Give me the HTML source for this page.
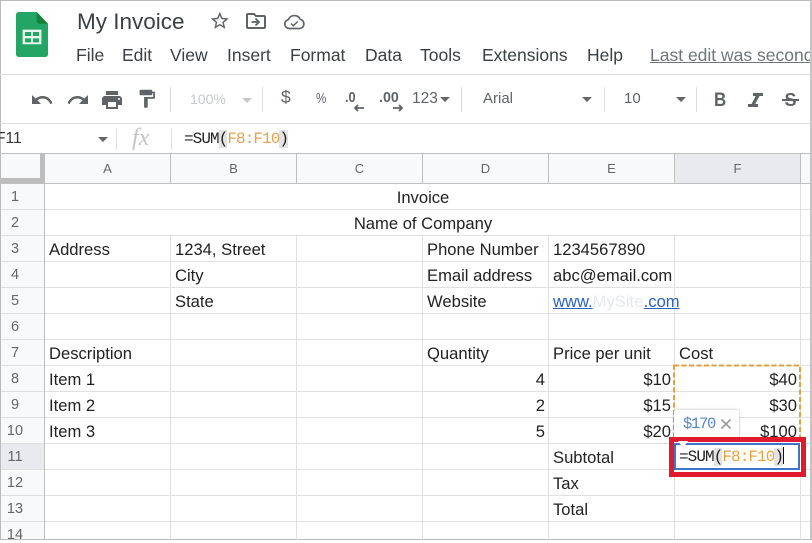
<!DOCTYPE html>
<html><head><meta charset="utf-8"><style>
html,body{margin:0;padding:0;background:#fff}
body{width:812px;height:540px;position:relative;overflow:hidden;font-family:"Liberation Sans",sans-serif;color:#222}
.a{position:absolute;white-space:nowrap}
.m{top:44px;font-size:17.5px;line-height:22px;color:#3c4043}
.l{position:absolute;background:#d4d4d4}
.c{position:absolute;font-size:16.6px;line-height:20px;white-space:nowrap;color:#222}
.r{text-align:right}
.h{position:absolute;font-size:13px;color:#666;text-align:center;line-height:16px}
.n{position:absolute;font-size:14.5px;color:#666;text-align:center;line-height:16px;left:1px;width:28px}
.tb{position:absolute;background:#dadce0;width:1px;top:87px;height:25px}
.d{position:absolute;width:0;height:0;border-left:5.5px solid transparent;border-right:5.5px solid transparent;border-top:5.5px solid #666}
.mono{font-family:"Liberation Mono",monospace}
.g{position:absolute;background:#e0e0e0;left:1px;width:809px;height:1px}
.v{position:absolute;background:#e0e0e0;width:1px;top:236px;height:304px}
.hv{position:absolute;background:#c0c0c0;width:1px;top:154px;height:29px}
</style></head><body>
<!-- frame -->
<div class="l" style="left:0;top:0;width:812px;height:1px;background:#bbb"></div>
<div class="l" style="left:0;top:0;width:1px;height:540px;background:#bbb"></div>
<div class="l" style="left:810px;top:0;width:2px;height:540px;background:#c4c4c4"></div>
<!-- logo -->
<svg class="a" style="left:16px;top:12px" width="32" height="45" viewBox="0 0 34 46" preserveAspectRatio="none">
<path d="M3 0H22L34 12V43a3 3 0 0 1-3 3H3a3 3 0 0 1-3-3V3a3 3 0 0 1 3-3z" fill="#23a566"/>
<path d="M22 0L34 12H25a3 3 0 0 1-3-3z" fill="#188038"/>
<path d="M7 18H27V33H7z M9.500 20.500V24.500H16V20.500z M18 20.500V24.500H24.500V20.500z M9.500 27V31H16V27z M18 27V31H24.500V27z" fill="#e6f4ea" fill-rule="evenodd"/>
</svg>
<div class="a" style="left:77px;top:8px;font-size:22.500px;line-height:28px;color:#3c4043">My Invoice</div>
<!-- star, move, cloud -->
<svg class="a" style="left:209px;top:10px" width="21.600" height="21.600" viewBox="0 0 24 24"><path d="M22 9.240l-7.190-.62L12 2 9.190 8.630 2 9.240l5.460 4.730L5.820 21 12 17.270 18.180 21l-1.630-7.030L22 9.240zM12 15.400l-3.760 2.270 1-4.280-3.320-2.880 4.380-.38L12 6.100l1.710 4.040 4.380.38-3.320 2.880 1 4.280L12 15.400z" fill="#5f6368"/></svg>
<svg class="a" style="left:245px;top:10px" width="22" height="20" viewBox="0 0 22 20"><path d="M3 4h6l2 2h8a1 1 0 0 1 1 1v10a1 1 0 0 1-1 1H3a1 1 0 0 1-1-1V5a1 1 0 0 1 1-1z" fill="none" stroke="#5f6368" stroke-width="2"/><path d="M6.500 12h7M10.500 8.500L14 12l-3.500 3.500" fill="none" stroke="#5f6368" stroke-width="1.800"/></svg>
<svg class="a" style="left:283px;top:13px" width="23" height="18" viewBox="0 0 23 18"><path d="M6 15.500a4.500 4.500 0 0 1-.6-8.900A6.500 6.500 0 0 1 17.300 6.300 4.700 4.700 0 0 1 17 15.500z" fill="none" stroke="#5f6368" stroke-width="1.700"/><path d="M8 10.500l2.300 2.200 4.500-4.200" fill="none" stroke="#5f6368" stroke-width="1.500"/></svg>
<!-- menu -->
<div class="a m" style="left:76px">File</div>
<div class="a m" style="left:122px">Edit</div>
<div class="a m" style="left:170px">View</div>
<div class="a m" style="left:227px">Insert</div>
<div class="a m" style="left:290px">Format</div>
<div class="a m" style="left:365px">Data</div>
<div class="a m" style="left:420px">Tools</div>
<div class="a m" style="left:482px">Extensions</div>
<div class="a m" style="left:587px">Help</div>
<div class="a m" style="left:650px;width:160px;overflow:hidden;color:#70757a;text-decoration:underline">Last edit was seconds ago</div>
<div class="l" style="left:0;top:74px;width:811px;height:1px;background:#dcdcdc"></div>
<!-- toolbar -->
<svg class="a" style="left:30px;top:88px" width="24" height="24" viewBox="0 0 24 24"><path d="M12.500 8c-2.650 0-5.050.99-6.900 2.600L2 7v9h9l-3.620-3.620c1.390-1.160 3.160-1.880 5.120-1.880 3.540 0 6.550 2.310 7.600 5.500l2.370-.78C21.080 11.030 17.150 8 12.500 8z" fill="#5f6368"/></svg>
<svg class="a" style="left:66px;top:88px" width="24" height="24" viewBox="0 0 24 24"><path d="M18.400 10.600C16.550 8.990 14.150 8 11.500 8c-4.650 0-8.580 3.030-9.960 7.220L3.900 16c1.050-3.190 4.050-5.500 7.600-5.500 1.950 0 3.730.72 5.120 1.880L13 16h9V7l-3.600 3.600z" fill="#5f6368"/></svg>
<svg class="a" style="left:100px;top:88px" width="24" height="24" viewBox="0 0 24 24"><path d="M19 8H5c-1.660 0-3 1.340-3 3v6h4v4h12v-4h4v-6c0-1.660-1.340-3-3-3zm-3 11H8v-5h8v5zm3-7c-.55 0-1-.45-1-1s.45-1 1-1 1 .45 1 1-.45 1-1 1zm-1-9H6v4h12V3z" fill="#5f6368"/></svg>
<svg class="a" style="left:136.400px;top:88px" width="21.600" height="21.600" viewBox="0 0 24 24"><path d="M18 4V3c0-.55-.45-1-1-1H5c-.55 0-1 .45-1 1v4c0 .55.45 1 1 1h12c.55 0 1-.45 1-1V6h1v4H9v11c0 .55.45 1 1 1h2c.55 0 1-.45 1-1v-9h8V4h-3z" fill="#5f6368"/></svg>
<div class="tb" style="left:170px"></div>
<div class="a" style="left:190px;top:90px;font-size:14px;line-height:18px;color:#c6c8ca">100%</div>
<div class="d" style="left:242px;top:98px;border-top-color:#c6c8ca"></div>
<div class="tb" style="left:262px"></div>
<div class="a" style="left:281px;top:87px;font-size:17.500px;line-height:20px;color:#5f6368">$</div>
<div class="a" style="left:316px;top:90px;font-size:14.500px;line-height:18px;color:#5f6368;transform:scaleX(.8);transform-origin:0 0">%</div>
<div class="a" style="left:345px;top:89px;font-size:15px;line-height:18px;color:#5f6368;font-weight:bold;transform:scaleX(.85);transform-origin:0 0">.0</div>
<svg class="a" style="left:353px;top:103px" width="12" height="10" viewBox="0 0 12 10"><path d="M11 5H2M5 2L2 5l3 3" fill="none" stroke="#5f6368" stroke-width="1.800"/></svg>
<div class="a" style="left:379px;top:89px;font-size:15px;line-height:18px;color:#5f6368;font-weight:bold;transform:scaleX(.95);transform-origin:0 0">.00</div>
<svg class="a" style="left:392px;top:103px" width="12" height="10" viewBox="0 0 12 10"><path d="M1 5h9M7 2l3 3-3 3" fill="none" stroke="#5f6368" stroke-width="1.800"/></svg>
<div class="a" style="left:412px;top:90px;font-size:15.500px;line-height:18px;color:#5f6368">123</div>
<div class="d" style="left:440px;top:97px"></div>
<div class="tb" style="left:461px"></div>
<div class="a" style="left:483px;top:90px;font-size:15px;line-height:18px;color:#5f6368">Arial</div>
<div class="d" style="left:582px;top:97px"></div>
<div class="tb" style="left:604px"></div>
<div class="a" style="left:624px;top:90px;font-size:15px;line-height:18px;color:#5f6368">10</div>
<div class="d" style="left:676px;top:97px"></div>
<div class="tb" style="left:696px"></div>
<div class="a" style="left:714px;top:89px;font-size:19.500px;line-height:22px;font-weight:bold;color:#5f6368;transform:scaleX(.87);transform-origin:0 0">B</div>
<svg class="a" style="left:748px;top:93px" width="15" height="14" viewBox="6 4 12 14" preserveAspectRatio="none"><path d="M10 4v3h2.210l-3.420 8H6v3h8v-3h-2.210l3.420-8H18V4z" fill="#5f6368"/></svg>
<div class="a" style="left:784.500px;top:89px;font-size:18px;line-height:22px;font-weight:bold;color:#5f6368">S</div>
<div class="a" style="left:782px;top:99px;width:17px;height:2px;background:#5f6368"></div>
<div class="l" style="left:0;top:123px;width:811px;height:1px;background:#dcdcdc"></div>
<!-- formula bar -->
<div class="a" style="left:0;top:129px;width:30px;overflow:hidden;font-size:15.500px;line-height:20px;color:#333"><span style="margin-left:-4px;display:inline-block">F11</span></div>
<div class="d" style="left:98px;top:137px"></div>
<div class="l" style="left:116px;top:129px;width:1px;height:21px;background:#e0e0e0"></div>
<div class="a" style="left:132px;top:124px;font-family:'Liberation Serif',serif;font-style:italic;font-size:24px;line-height:28px;color:#c4c4c4">fx</div>
<div class="l" style="left:171px;top:129px;width:1px;height:21px;background:#e0e0e0"></div>
<div class="a mono" style="left:184px;top:129px;font-size:16px;line-height:20px;letter-spacing:-.93px;color:#222">=SUM<span style="background:#e3e3e3">(</span><span style="color:#e8a04c">F8:F10</span><span style="background:#e3e3e3">)</span></div>
<div class="l" style="left:0;top:153px;width:811px;height:1px;background:#c0c0c0"></div>
<!-- header backgrounds -->
<div class="a" style="left:1px;top:154px;width:809px;height:29px;background:#f8f9fa"></div>
<div class="a" style="left:675px;top:154px;width:125px;height:29px;background:#e8eaed"></div>
<div class="a" style="left:1px;top:154px;width:44px;height:386px;background:#f8f9fa"></div>
<div class="a" style="left:1px;top:444px;width:43px;height:25px;background:#e8eaed"></div>
<div class="l" style="left:40px;top:154px;width:5px;height:29px;background:#bdbdbd"></div>
<div class="l" style="left:0;top:178px;width:45px;height:5px;background:#bdbdbd"></div>
<!-- grid lines horizontal -->
<div class="l" style="left:0;top:183px;width:810px;height:1px;background:#c0c0c0"></div>
<div class="g" style="top:209px"></div>
<div class="g" style="top:235px"></div>
<div class="g" style="top:261px"></div>
<div class="g" style="top:287px"></div>
<div class="g" style="top:313px"></div>
<div class="g" style="top:339px"></div>
<div class="g" style="top:365px"></div>
<div class="g" style="top:391px"></div>
<div class="g" style="top:417px"></div>
<div class="g" style="top:443px"></div>
<div class="g" style="top:469px"></div>
<div class="g" style="top:495px"></div>
<div class="g" style="top:521px"></div>
<div class="l" style="left:0;top:539px;width:812px;height:1px;background:#bbb"></div>
<!-- vertical -->
<div class="l" style="left:44px;top:154px;width:1px;height:386px;background:#c0c0c0"></div>
<div class="hv" style="left:170px"></div>
<div class="hv" style="left:296px"></div>
<div class="hv" style="left:422px"></div>
<div class="hv" style="left:548px"></div>
<div class="hv" style="left:674px"></div>
<div class="hv" style="left:800px"></div>
<div class="v" style="left:170px"></div>
<div class="v" style="left:296px"></div>
<div class="v" style="left:422px"></div>
<div class="v" style="left:548px"></div>
<div class="v" style="left:674px"></div>
<div class="v" style="left:800px;top:184px;height:356px"></div>
<!-- column heads -->
<div class="h" style="left:45px;top:161px;width:125px">A</div>
<div class="h" style="left:171px;top:161px;width:125px">B</div>
<div class="h" style="left:297px;top:161px;width:125px">C</div>
<div class="h" style="left:423px;top:161px;width:125px">D</div>
<div class="h" style="left:549px;top:161px;width:125px">E</div>
<div class="h" style="left:675px;top:161px;width:125px">F</div>
<!-- row heads -->
<div class="n" style="top:189px">1</div>
<div class="n" style="top:215px">2</div>
<div class="n" style="top:241px">3</div>
<div class="n" style="top:267px">4</div>
<div class="n" style="top:293px">5</div>
<div class="n" style="top:319px">6</div>
<div class="n" style="top:345px">7</div>
<div class="n" style="top:371px">8</div>
<div class="n" style="top:397px">9</div>
<div class="n" style="top:423px">10</div>
<div class="n" style="top:449px">11</div>
<div class="n" style="top:475px">12</div>
<div class="n" style="top:501px">13</div>
<div class="n" style="top:527px">14</div>
<!-- cells -->
<div class="c" style="left:45px;top:188px;width:756px;text-align:center">Invoice</div>
<div class="c" style="left:45px;top:214px;width:756px;text-align:center">Name of Company</div>
<div class="c" style="left:49px;top:240px">Address</div>
<div class="c" style="left:175px;top:240px">1234, Street</div>
<div class="c" style="left:427px;top:240px">Phone Number</div>
<div class="c" style="left:553px;top:240px">1234567890</div>
<div class="c" style="left:175px;top:266px">City</div>
<div class="c" style="left:427px;top:266px">Email address</div>
<div class="c" style="left:553px;top:266px">abc@email.com</div>
<div class="c" style="left:175px;top:292px">State</div>
<div class="c" style="left:427px;top:292px">Website</div>
<div class="c" style="left:553px;top:292px;color:#2a62c4;text-decoration:underline">www.<span style="display:inline-block;width:51px;overflow:hidden;vertical-align:bottom;text-decoration:none;color:#e4e8ef">MySite</span>.com</div>
<div class="c" style="left:49px;top:344px">Description</div>
<div class="c" style="left:427px;top:344px">Quantity</div>
<div class="c" style="left:553px;top:344px">Price per unit</div>
<div class="c" style="left:679px;top:344px">Cost</div>
<div class="c" style="left:49px;top:370px">Item 1</div>
<div class="c" style="left:49px;top:396px">Item 2</div>
<div class="c" style="left:49px;top:422px">Item 3</div>
<div class="c r" style="left:423px;top:370px;width:122px">4</div>
<div class="c r" style="left:423px;top:396px;width:122px">2</div>
<div class="c r" style="left:423px;top:422px;width:122px">5</div>
<div class="c r" style="left:549px;top:370px;width:122px">$10</div>
<div class="c r" style="left:549px;top:396px;width:122px">$15</div>
<div class="c r" style="left:549px;top:422px;width:122px">$20</div>
<div class="c r" style="left:675px;top:370px;width:122px">$40</div>
<div class="c r" style="left:675px;top:396px;width:122px">$30</div>
<div class="c r" style="left:675px;top:422px;width:122px">$100</div>
<div class="c" style="left:553px;top:448px">Subtotal</div>
<div class="c" style="left:553px;top:474px">Tax</div>
<div class="c" style="left:553px;top:500px">Total</div>
<!-- dashed range -->
<svg class="a" style="left:672px;top:363px" width="130" height="82"><rect x="2" y="2.500" width="126" height="90" fill="none" stroke="#e3a23f" stroke-width="2" stroke-dasharray="5 2.500"/></svg>
<!-- tooltip -->
<div class="a" style="left:674px;top:410px;width:65px;height:28px;background:#fff;box-shadow:0 0 3px rgba(0,0,0,.25);border-radius:2px"></div>
<div class="a mono" style="left:683px;top:415px;font-size:15.500px;line-height:18px;letter-spacing:-1.300px;color:#5b86c9">$170</div>
<svg class="a" style="left:720px;top:418px" width="12" height="12" viewBox="0 0 12 12"><path d="M1.500 1.500l9 9M10.500 1.500l-9 9" stroke="#999" stroke-width="1.600"/></svg>
<!-- red box + edit cell -->
<div class="a" style="left:669px;top:437px;width:127px;height:30px;border:5px solid #e01b2f;background:#fff"></div>
<div class="a" style="left:674px;top:443px;width:126px;height:27px;box-sizing:border-box;border:2px solid #3f74c9;background:#fff"></div>
<div class="a" style="left:678px;top:441px;width:10px;height:7px;background:#fff;clip-path:polygon(0 0,100% 0,50% 100%)"></div>
<div class="a mono" style="left:679px;top:447px;font-size:16px;line-height:20px;letter-spacing:-.93px;color:#222">=SUM<span style="background:#e3e3e3">(</span><span style="color:#e8a33d">F8:F10</span><span style="background:#e3e3e3">)</span><span style="display:inline-block;width:1px;height:17px;background:#111;vertical-align:-3px"></span></div>
</body></html>
